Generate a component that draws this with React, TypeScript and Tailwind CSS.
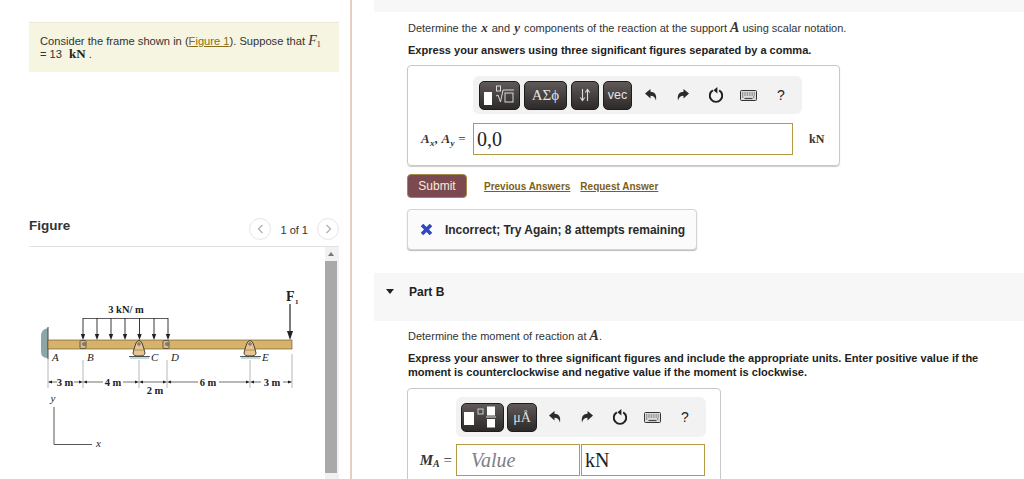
import type { ReactNode } from "react";

const serif = "font-['Liberation_Serif',serif]";

function UndoIcon({ flip = false }: { flip?: boolean }) {
  return (
    <svg width="14" height="14" viewBox="0 0 14 14" className={flip ? "-scale-x-100" : ""}>
      <path d="M1 5.5 L6.5 1 V3.8 C10.5 3.8 13 6.5 12 12.5 C11 9.2 9.2 7.8 6.5 7.8 V10.5 Z" fill="#2b2b2b" />
    </svg>
  );
}

function ResetIcon() {
  return (
    <svg width="16" height="16" viewBox="0 0 16 16">
      <path d="M4.8 3.4 A6.2 6.2 0 1 0 11.2 3.4" fill="none" stroke="#1f1f1f" strokeWidth="1.9" />
      <path d="M9.4 0 L9.4 6.4 L5.4 3.2 Z" fill="#1f1f1f" />
    </svg>
  );
}

function KeyboardIcon() {
  return (
    <svg width="17" height="11" viewBox="0 0 17 11" className="-ml-[2px]">
      <rect x="0.5" y="0.5" width="16" height="10" rx="1" fill="#dcdcdc" stroke="#333" />
      <path d="M2 3h13M2 5h13M2 7h2M13 7h2" stroke="#555" strokeWidth="1" strokeDasharray="1 0.7" />
      <path d="M4.5 8.5h8" stroke="#444" strokeWidth="1.2" />
    </svg>
  );
}

function ToolButton({ className, children }: { className: string; children: ReactNode }) {
  return (
    <div className={`flex h-[29px] items-center justify-center rounded-[5px] border border-[#1d1d1d] bg-gradient-to-b from-[#5f5a58] to-[#2e2a2a] ${className}`}>
      {children}
    </div>
  );
}

function ToolActions() {
  return (
    <div className="flex items-center gap-[18px]">
      <UndoIcon />
      <UndoIcon flip />
      <ResetIcon />
      <KeyboardIcon />
      <span className="w-3 text-center text-[14px] leading-none text-[#222]">?</span>
    </div>
  );
}

function BeamSupport({ x }: { x: number }) {
  return (
    <g>
      <path d={`M${x - 9} 356 H${x + 10} V359 H${x - 9} Z`} fill="#c3d8d8" />
      <path d={`M${x - 10} 356.5 H${x + 11}`} stroke="#333" strokeWidth="0.8" />
      <path d={`M${x - 3} 343 Q${x} 338 ${x + 3} 343 L${x + 5} 349 L${x + 6} 353 Q${x + 6} 356 ${x} 356 Q${x - 6} 356 ${x - 6} 353 L${x - 5} 349 Z`} fill="#e8c490" stroke="#333" strokeWidth="0.9" />
      <path d={`M${x - 5} 350 H${x + 5}`} stroke="#8a6a3a" strokeWidth="0.6" />
      <circle cx={x} cy={344} r="1.4" fill="#999" stroke="#444" strokeWidth="0.5" />
    </g>
  );
}

function BeamFigure() {
  const loads = [83, 97, 111, 125, 139.5, 154, 168];
  const ticks = [48, 83, 139, 167, 250, 292];
  const labels = "font-['Liberation_Serif',serif] text-[11px] italic fill-[#222]";
  const dims = "font-['Liberation_Serif',serif] text-[10.5px] font-bold fill-[#222]";
  return (
    <svg className="h-[232px] w-[296px] shrink-0" viewBox="29 247 296 232">
      <path d="M48 328 Q41 329 41 336 V352 Q41 358 48 358 Z" fill="#8ea5a5" />
      <path d="M48 327 V359" stroke="#444" strokeWidth="1" />
      <rect x="48" y="340" width="244" height="9" fill="#d7b26b" stroke="#5a4a2a" strokeWidth="0.6" />
      <rect x="80" y="340.5" width="6" height="8" fill="#d9bb7c" stroke="#444" strokeWidth="0.8" rx="1" />
      <circle cx="84" cy="344" r="1.5" fill="#888" stroke="#444" strokeWidth="0.5" />
      <rect x="163" y="340.5" width="6" height="8" fill="#d9bb7c" stroke="#444" strokeWidth="0.8" rx="1" />
      <circle cx="167" cy="344" r="1.5" fill="#888" stroke="#444" strokeWidth="0.5" />
      <BeamSupport x={139} />
      <BeamSupport x={250} />

      <path d="M83 318.5 H168" stroke="#333" strokeWidth="0.8" />
      {loads.map((x) => (
        <g key={x}>
          <path d={`M${x} 318 V336`} stroke="#222" strokeWidth="0.9" />
          <path d={`M${x - 2.2} 334 H${x + 2.2} L${x} 340 Z`} fill="#222" />
        </g>
      ))}
      <text x="126" y="313" textAnchor="middle" className={dims}>3 kN/ m</text>

      <path d="M290 304 V334" stroke="#222" strokeWidth="1.2" />
      <path d="M287 331 H293 L290 340 Z" fill="#222" />
      <text x="286" y="301" className="font-['Liberation_Serif',serif] text-[14px] font-bold fill-[#222]">F</text>
      <text x="295" y="304" className="font-['Liberation_Serif',serif] text-[7px] font-bold fill-[#222]">1</text>

      <text x="52" y="361" className={labels}>A</text>
      <text x="87" y="361" className={labels}>B</text>
      <text x="151" y="361" className={labels}>C</text>
      <text x="171" y="361" className={labels}>D</text>
      <text x="262" y="361" className={labels}>E</text>

      {ticks.map((x) => (
        <path key={x} d={`M${x} ${x === 48 ? 358 : x === 292 ? 354 : 360} V388`} stroke="#999" strokeWidth="0.7" />
      ))}
      <path d="M49 382 H57 M74 382 H81 M85 382 H103 M123 382 H137 M141 382 H165 M169 382 H198 M219 382 H248 M252 382 H261 M283 382 H291" stroke="#333" strokeWidth="0.7" />
      {ticks.map((x) => (
        <g key={x}>
          {x !== 48 && <path d={`M${x} 382 L${x - 4} 380.6 V383.4 Z`} fill="#222" />}
          {x !== 292 && <path d={`M${x} 382 L${x + 4} 380.6 V383.4 Z`} fill="#222" />}
        </g>
      ))}
      <text x="65" y="385.5" textAnchor="middle" className={dims}>3 m</text>
      <text x="113" y="385.5" textAnchor="middle" className={dims}>4 m</text>
      <text x="155" y="393.5" textAnchor="middle" className={dims}>2 m</text>
      <text x="208" y="385.5" textAnchor="middle" className={dims}>6 m</text>
      <text x="272" y="385.5" textAnchor="middle" className={dims}>3 m</text>

      <text x="53" y="402" textAnchor="middle" className={labels}>y</text>
      <path d="M54 407 V444.5 H92" fill="none" stroke="#444" strokeWidth="0.9" />
      <text x="96" y="447" className={labels}>x</text>
    </svg>
  );
}

function LeftPanel() {
  return (
    <aside className="flex h-full w-[352px] shrink-0 flex-col border-r-2 border-[#e4cfc0] pl-[29px] pr-[11px] pt-[22px]">
      <div className="h-[50px] border-t border-[#ece8d4] bg-[#f5f5e1] pl-[11px] pt-[11px] text-[11.15px] leading-[13px] text-[#333]">
        <p className="h-[13px] whitespace-nowrap">
          Consider the frame shown in (<span className="text-[#8a6d14] underline">Figure 1</span>). Suppose that{" "}
          <i className={`${serif} text-[14px] leading-none`}>F</i>
          <sub className={`${serif} text-[8px] leading-none`}>1</sub>
        </p>
        <p className="h-[13px]">
          = 13 <span className={`${serif} ml-1 text-[13px] font-bold leading-none text-[#222]`}>kN</span> .
        </p>
      </div>

      <div className="mt-[146px] flex h-[28px] items-start justify-between">
        <span className="text-[13.5px] font-bold leading-4 text-[#333]">Figure</span>
        <div className="flex items-center gap-[9px] text-[11px] text-[#333]">
          <span className="flex h-[22px] w-[22px] items-center justify-center rounded-full border border-[#e6e6e6] text-[#aaa]">
            <svg width="7" height="10" viewBox="0 0 7 10"><path d="M5.5 1 L1.5 5 L5.5 9" fill="none" stroke="#b0b0b0" strokeWidth="1.3" /></svg>
          </span>
          <span className="mt-[3px]">1 of 1</span>
          <span className="flex h-[22px] w-[22px] items-center justify-center rounded-full border border-[#e6e6e6]">
            <svg width="7" height="10" viewBox="0 0 7 10"><path d="M1.5 1 L5.5 5 L1.5 9" fill="none" stroke="#b0b0b0" strokeWidth="1.3" /></svg>
          </span>
        </div>
      </div>

      <div className="flex min-h-0 flex-1 border-t border-[#e2e2e2]">
        <BeamFigure />
        <div className="flex w-[14px] flex-col items-start bg-[#f1f1f1]">
          <div className="flex h-[14px] w-[12px] items-center justify-center">
            <div className="h-0 w-0 border-x-[3px] border-b-[4px] border-x-transparent border-b-[#777]" />
          </div>
          <div className="h-[212px] w-[12px] bg-[#a9a9a9]" />
        </div>
      </div>
    </aside>
  );
}

function RightPanel() {
  return (
    <main className="ml-[22px] min-w-0 flex-1 overflow-hidden text-[11.05px] text-[#222]">
      <div className="h-3 bg-[#f7f7f7]" />

      <div className="pl-[34px]">
        <p className="mt-[9px] text-[11px] leading-[14px] text-[#333]">
          Determine the <i className={`${serif} mx-px text-[13px] font-bold`}>x</i> and <i className={`${serif} mx-px text-[13px] font-bold`}>y</i> components of the reaction at the support{" "}
          <i className={`${serif} text-[14px] font-bold`}>A</i> using scalar notation.
        </p>
        <p className="mt-2 font-bold leading-[14px]">Express your answers using three significant figures separated by a comma.</p>

        <section className="ml-[-1px] mt-2 h-[101px] w-[433px] rounded border border-[#c8c8c8] shadow-[0_1px_1px_#ccc]">
          <div className="ml-[65px] mt-[10px] flex h-[38px] w-[329px] items-center rounded-md bg-[#f2f2f2] pl-[6px]">
            <ToolButton className="w-[41px] gap-[3px]">
              <div className="mt-[6px] h-[13px] w-[8px] bg-white" />
              <svg width="20" height="20" viewBox="0 0 20 20" fill="none" stroke="#d8d8d8" strokeWidth="1">
                <rect x="1.5" y="1" width="4" height="5" />
                <path d="M1 11 L3 10 L5.5 17 L8 5 H19" />
                <rect x="10" y="8" width="8" height="9" />
              </svg>
            </ToolButton>
            <ToolButton className={`ml-1 w-[43px] ${serif} text-[15px] text-[#e4e4e4]`}>ΑΣϕ</ToolButton>
            <ToolButton className="ml-[4px] w-[28px] text-[#ddd]">
              <svg width="12" height="14" viewBox="0 0 12 14" fill="none" stroke="#ddd" strokeWidth="1.1">
                <path d="M3.5 1 V12 M1.3 9.5 L3.5 12.5 L5.7 9.5 M8.5 13 V2 M6.3 4.5 L8.5 1.5 L10.7 4.5" />
              </svg>
            </ToolButton>
            <ToolButton className="ml-[4px] w-[29px] text-[12.5px] text-[#e4e4e4]">vec</ToolButton>
            <div className="ml-[12px]">
              <ToolActions />
            </div>
          </div>
          <div className="mt-[9px] flex items-center">
            <span className={`${serif} w-[65px] whitespace-nowrap pr-[7px] text-right text-[13px] font-bold italic tracking-[0.3px] text-[#333]`}>
              A<sub className="text-[9px]">x</sub>, A<sub className="text-[9px]">y</sub> <span className="font-normal not-italic">=</span>
            </span>
            <div className={`flex h-[32px] w-[320px] items-center border border-[#b59a45] pl-[3px] ${serif} text-[20px] text-[#222]`}>0,0</div>
            <span className={`${serif} ml-[16px] text-[12px] font-bold text-[#333]`}>kN</span>
          </div>
        </section>

        <div className="ml-[-1px] mt-2 flex items-center">
          <div className="flex h-[24px] w-[60px] items-center justify-center rounded-sm border border-[#a8874a] bg-[#7b4a50] text-[12px] text-[#f5ecd8]">Submit</div>
          <span className="ml-[17px] text-[10px] font-bold text-[#7d5f16] underline">Previous Answers</span>
          <span className="ml-[10px] text-[10px] font-bold text-[#7d5f16] underline">Request Answer</span>
        </div>

        <div className="ml-[-1px] mt-[11px] flex h-[41px] w-[290px] items-center rounded border border-[#d4d4d4] bg-[#fbfbfb] pl-[12px] shadow-[0_1px_1px_#bbb]">
          <svg width="13" height="13" viewBox="0 0 13 13">
            <path d="M2 2 L11 11 M11 2 L2 11" stroke="#2f49c0" strokeWidth="3.6" />
          </svg>
          <span className="ml-[12px] text-[12px] font-bold tracking-[-0.02px] text-[#2a2a2a]">Incorrect; Try Again; 8 attempts remaining</span>
        </div>
      </div>

      <div className="mt-[23px] flex h-[48px] items-start bg-[#f7f7f7] pl-[12px] pt-[12px]">
        <div className="mt-[4px] h-0 w-0 border-x-[4.5px] border-t-[5px] border-x-transparent border-t-[#222]" />
        <span className="ml-[15px] text-[12px] font-bold leading-[14px] text-[#222]">Part B</span>
      </div>

      <div className="pl-[34px]">
        <p className="mt-[8px] text-[11px] leading-[14px] text-[#333]">
          Determine the moment of reaction at <i className={`${serif} text-[14px] font-bold`}>A</i>.
        </p>
        <p className="mt-[8px] w-[600px] font-bold leading-[14px]">
          Express your answer to three significant figures and include the appropriate units. Enter positive value if the moment is counterclockwise and negative value if the moment is clockwise.
        </p>

        <section className="ml-[-1px] mt-[9px] h-[100px] w-[314px] rounded border border-[#c8c8c8]">
          <div className="ml-[48px] mt-2 flex h-[40px] w-[250px] items-center rounded-md bg-[#f2f2f2] pl-[5px]">
            <ToolButton className="w-[43px] gap-[3px]">
              <div className="mt-[3px] h-[13px] w-[10px] bg-white" />
              <svg width="24" height="24" viewBox="0 0 24 24">
                <rect x="1" y="4" width="5" height="5" fill="none" stroke="#ccc" />
                <rect x="10" y="1.5" width="8" height="9" fill="#fff" />
                <path d="M9 12 H19" stroke="#ddd" />
                <rect x="10" y="14" width="8" height="8.5" fill="#fff" />
              </svg>
            </ToolButton>
            <ToolButton className={`ml-[3px] w-[30px] ${serif} text-[14px] text-[#ddd]`}>μÅ</ToolButton>
            <div className="ml-[11px]">
              <ToolActions />
            </div>
          </div>
          <div className="mt-[7px] flex items-center">
            <span className={`${serif} w-[48px] whitespace-nowrap pr-[4px] text-right text-[15px] font-bold italic text-[#333]`}>
              M<sub className="text-[10px]">A</sub> <span className="font-normal not-italic">=</span>
            </span>
            <div className={`flex h-[32px] w-[124px] items-center border border-[#b59a45] pl-[14px] ${serif} text-[20px] italic text-[#7c8088]`}>Value</div>
            <div className={`ml-px flex h-[32px] w-[124px] items-center border border-[#b59a45] pl-[3px] ${serif} text-[20px] text-[#222]`}>kN</div>
          </div>
        </section>
      </div>
    </main>
  );
}

export default function App() {
  return (
    <div className="flex h-[479px] w-[1024px] overflow-hidden bg-white font-['Liberation_Sans',Arial,sans-serif]">
      <LeftPanel />
      <RightPanel />
    </div>
  );
}
